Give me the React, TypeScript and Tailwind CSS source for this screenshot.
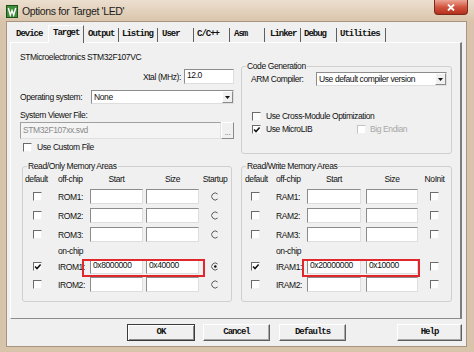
import React from "react";

function Check({ checked = false, disabled = false }: { checked?: boolean; disabled?: boolean }) {
  return (
    <span
      className={
        "relative block h-[9px] w-[9px] shrink-0 border bg-white border-r-[#f2f2f2] border-b-[#f2f2f2] " +
        (disabled ? "border-t-[#c2c2c2] border-l-[#c2c2c2]" : "border-t-[#6b6b6b] border-l-[#6b6b6b]")
      }
    >
      {checked && (
        <svg className="absolute left-0 top-0" width="8" height="8" viewBox="0 0 8 8">
          <path d="M1 3.5 L3 5.6 L6.6 1.4" stroke="#111" strokeWidth="1.5" fill="none" />
        </svg>
      )}
    </span>
  );
}

function Radio({ checked = false }: { checked?: boolean }) {
  return (
    <svg width="8" height="9" viewBox="0 0 8 9" className="block">
      <path d="M6.6 2 A3.5 3.5 0 1 0 6.6 7" stroke="#5a5a5a" strokeWidth="1" fill="none" />
      {checked && <circle cx="4.3" cy="4.5" r="1.3" fill="#111" />}
    </svg>
  );
}

function Field({ className = "", value = "" }: { className?: string; value?: string }) {
  return (
    <div
      className={
        "h-[15px] shrink-0 overflow-hidden whitespace-nowrap border bg-white pl-[2px] leading-[11px] text-[#111] border-t-[#8c8c8c] border-l-[#8c8c8c] border-r-[#dedede] border-b-[#dedede] " +
        className
      }
    >
      {value}
    </div>
  );
}

function Select({ className = "", value }: { className?: string; value: string }) {
  return (
    <div
      className={
        "flex h-[14px] shrink-0 items-center justify-between border bg-white pl-[2px] border-t-[#8c8c8c] border-l-[#8c8c8c] border-r-[#dedede] border-b-[#dedede] " +
        className
      }
    >
      <span className="whitespace-nowrap leading-[12px]">{value}</span>
      <span className="flex h-[12px] w-[11px] shrink-0 items-center justify-center border border-t-white border-l-white border-r-[#8a8a8a] border-b-[#8a8a8a] bg-[#f0f0f0]">
        <svg width="5" height="3" viewBox="0 0 5 3">
          <path d="M0 0 H5 L2.5 3 Z" fill="#111" />
        </svg>
      </span>
    </div>
  );
}

type MemCfg = {
  title: string;
  lastHeader: string;
  prefix: string;
  outer: string;
  c1: string;
  c2: string;
  ws: string;
  gap: string;
  wz: string;
  cbMl: string;
  defPl: string;
  start: string;
  size: string;
  radio: boolean;
  red: string;
};

function MemRow({
  cfg,
  label,
  checked,
  start,
  size,
  lastChecked,
  mt,
}: {
  cfg: MemCfg;
  label: string;
  checked: boolean;
  start: string;
  size: string;
  lastChecked: boolean;
  mt: string;
}) {
  return (
    <div className={"flex h-[15px] items-center " + mt}>
      <div className={"shrink-0 " + cfg.c1}>
        <div className={cfg.cbMl}>
          <Check checked={checked} />
        </div>
      </div>
      <div className={"shrink-0 whitespace-nowrap leading-[12px] " + cfg.c2}>{label}</div>
      <Field className={cfg.ws} value={start} />
      <div className={"shrink-0 " + cfg.gap} />
      <Field className={cfg.wz} value={size} />
      <div className="flex flex-1 justify-center">
        {cfg.radio ? <Radio checked={lastChecked} /> : <Check />}
      </div>
    </div>
  );
}

function MemGroup({ cfg }: { cfg: MemCfg }) {
  const p = cfg.prefix;
  return (
    <div className={"relative h-[136px] shrink-0 rounded-[3px] border border-[#cfcfcf] " + cfg.outer}>
      <span className="absolute left-[4px] top-[-7px] whitespace-nowrap bg-[#f0f0f0] px-[1px] leading-[12px]">{cfg.title}</span>
      <div className="mt-[6px] flex h-[12px] items-center whitespace-nowrap leading-[12px]">
        <div className={"shrink-0 " + cfg.c1 + " " + cfg.defPl}>default</div>
        <div className={"shrink-0 " + cfg.c2}>off-chip</div>
        <div className={"shrink-0 text-center " + cfg.ws}>Start</div>
        <div className={"shrink-0 " + cfg.gap} />
        <div className={"shrink-0 text-center " + cfg.wz}>Size</div>
        <div className="flex-1 text-center">{cfg.lastHeader}</div>
      </div>
      <MemRow cfg={cfg} label={p + "1:"} checked={false} start="" size="" lastChecked={false} mt="mt-[4px]" />
      <MemRow cfg={cfg} label={p + "2:"} checked={false} start="" size="" lastChecked={false} mt="mt-[4px]" />
      <MemRow cfg={cfg} label={p + "3:"} checked={false} start="" size="" lastChecked={false} mt="mt-[4px]" />
      <div className="mt-[3px] flex h-[12px] items-center leading-[12px]">
        <div className={"shrink-0 " + cfg.c1} />
        <div>on-chip</div>
      </div>
      <MemRow cfg={cfg} label={"I" + p + "1:"} checked={true} start={cfg.start} size={cfg.size} lastChecked={true} mt="mt-[2px]" />
      <MemRow cfg={cfg} label={"I" + p + "2:"} checked={false} start="" size="" lastChecked={false} mt="mt-[3px]" />
      <div className={"absolute top-[92px] h-[18px] border-2 border-[#e0282c] " + cfg.red} />
    </div>
  );
}

const tabs: [string, string][] = [
  ["Device", "w-[38px] pl-[6px]"],
  ["Target", "w-[36px] pl-[4px]"],
  ["Output", "w-[35px] pl-[4px]"],
  ["Listing", "w-[39px] pl-[3px]"],
  ["User", "w-[36px] pl-[4px]"],
  ["C/C++", "w-[36px] pl-[3px]"],
  ["Asm", "w-[35px] pl-[4px]"],
  ["Linker", "w-[36px] pl-[5px]"],
  ["Debug", "w-[36px] pl-[3px]"],
  ["Utilities", "w-[49px] pl-[3px]"],
];

const romCfg: MemCfg = {
  title: "Read/Only Memory Areas",
  lastHeader: "Startup",
  prefix: "ROM",
  outer: "ml-[11px] w-[210px]",
  c1: "w-[35px]",
  c2: "w-[32px]",
  ws: "w-[53px]",
  gap: "w-[3px]",
  wz: "w-[53px]",
  cbMl: "ml-[10px]",
  defPl: "pl-[2px]",
  start: "0x8000000",
  size: "0x40000",
  radio: true,
  red: "left-[59px] w-[123px]",
};

const ramCfg: MemCfg = {
  title: "Read/Write Memory Areas",
  lastHeader: "NoInit",
  prefix: "RAM",
  outer: "ml-[9px] w-[211px]",
  c1: "w-[34px]",
  c2: "w-[31px]",
  ws: "w-[54px]",
  gap: "w-[5px]",
  wz: "w-[52px]",
  cbMl: "ml-[9px]",
  defPl: "pl-[3px]",
  start: "0x20000000",
  size: "0x10000",
  radio: false,
  red: "left-[60px] w-[118px]",
};

function Btn({ label, className, def = false }: { label: string; className: string; def?: boolean }) {
  return (
    <div
      className={
        "flex h-[17px] shrink-0 items-center justify-center font-['Liberation_Mono','DejaVu_Sans_Mono',monospace] text-[9px] font-bold tracking-[-1px] text-[#111] bg-[#f0f0f0] " +
        (def
          ? "border border-[#3a3a3a] shadow-[inset_1px_1px_0_#fff,inset_-1px_-1px_0_#8a8a8a] "
          : "border border-t-white border-l-white border-r-[#5e5e5e] border-b-[#5e5e5e] shadow-[inset_-1px_-1px_0_#a8a8a8] ") +
        className
      }
    >
      {label}
    </div>
  );
}

export default function App() {
  return (
    <div className="flex h-[352px] w-[474px] flex-col overflow-hidden bg-[#d8c4ab] font-['Liberation_Sans',Arial,sans-serif] text-[8.5px] tracking-[-0.4px] text-[#111]">
      {/* title bar */}
      <div className="flex h-[22px] shrink-0 items-center bg-gradient-to-b from-[#ecdfcf] to-[#d9c4aa]">
        <svg className="ml-[6px] shrink-0" width="12" height="13" viewBox="0 0 12 13">
          <rect x="0.5" y="0.5" width="11" height="12" fill="#3f8f3a" stroke="#1f4f1c" />
          <path d="M2.3 3 L4.3 10 L6 5.5 L7.7 10 L9.7 3" stroke="#fff" strokeWidth="1.4" fill="none" />
        </svg>
        <span className="ml-[4px] whitespace-nowrap text-[10.5px] leading-[14px] tracking-[-0.35px] text-[#1b1b1b]">
          Options for Target 'LED'
        </span>
        <div className="mb-auto ml-auto mr-[6px] flex h-[15px] w-[34px] items-center justify-center rounded-b-[4px] border border-t-0 border-[#7d2a1e] bg-gradient-to-b from-[#eaa595] via-[#d2553f] to-[#b5301c]">
          <svg width="8" height="7" viewBox="0 0 8 7">
            <path d="M1 0.5 L7 6.5 M7 0.5 L1 6.5" stroke="#fff" strokeWidth="1.8" />
          </svg>
        </div>
      </div>

      {/* middle */}
      <div className="flex h-[324px] shrink-0">
        <div className="w-[7px] shrink-0" />
        <div className="flex h-[324px] w-[459px] shrink-0 flex-col bg-[#f0f0f0] shadow-[0_0_0_1px_#a8957f]">
          {/* tabs */}
          <div className="flex h-[20px] shrink-0 items-end pl-[3px]">
            {tabs.map(([t, cls]) =>
              t === "Target" ? (
                <div
                  key={t}
                  className={
                    "relative z-10 -mb-[1px] flex h-[18px] shrink-0 items-center border-l border-t border-r border-l-white border-t-white border-r-[#5e5e5e] bg-[#f0f0f0] pb-[2px] font-['Liberation_Mono','DejaVu_Sans_Mono',monospace] text-[9px] font-bold tracking-[-1px] " +
                    cls
                  }
                >
                  {t}
                </div>
              ) : (
                <div
                  key={t}
                  className={
                    "flex h-[14px] shrink-0 items-center font-['Liberation_Mono','DejaVu_Sans_Mono',monospace] text-[9px] font-bold tracking-[-1px] " +
                    (t === "Device" ? "" : "border-r border-r-[#5e5e5e] ") +
                    cls
                  }
                >
                  {t}
                </div>
              )
            )}
          </div>

          {/* tab page */}
          <div className="ml-[3px] flex h-[277px] w-[452px] shrink-0 flex-col whitespace-nowrap border-t border-l border-b border-r-2 border-t-white border-l-white border-b-[#8d8d8d] border-r-[#7d7d7d]">
            <div className="flex h-[123px] shrink-0">
              {/* left column */}
              <div className="ml-[9px] flex w-[214px] shrink-0 flex-col">
                <div className="mt-[8px] h-[12px] leading-[12px]">STMicroelectronics STM32F107VC</div>
                <div className="mt-[6px] flex h-[15px] items-center justify-end">
                  <span className="mr-[3px] leading-[12px]">Xtal (MHz):</span>
                  <Field className="w-[50px]" value="12.0" />
                </div>
                <div className="mt-[6px] flex h-[14px] items-center">
                  <span className="leading-[12px]">Operating system:</span>
                  <Select className="ml-auto w-[143px]" value="None" />
                </div>
                <div className="mt-[5px] h-[12px] leading-[12px]">System Viewer File:</div>
                <div className="mt-[1px] flex h-[17px]">
                  <div className="flex h-[17px] w-[201px] items-center border bg-[#f4f4f4] pl-[2px] text-[#8a8a8a] border-t-[#a0a0a0] border-l-[#a0a0a0] border-r-[#e0e0e0] border-b-[#e0e0e0]">
                    STM32F107xx.svd
                  </div>
                  <div className="flex h-[17px] w-[13px] items-end justify-center border border-t-white border-l-white border-r-[#8a8a8a] border-b-[#8a8a8a] pb-[2px] leading-[8px] text-[#8a8a8a]">
                    ...
                  </div>
                </div>
                <div className="mt-[3px] flex h-[10px] items-center pl-[3px]">
                  <Check />
                  <span className="ml-[5px] leading-[12px]">Use Custom File</span>
                </div>
              </div>

              {/* right column */}
              <div className="ml-[7px] w-[211px] shrink-0">
                <div className="relative mt-[23px] h-[88px] rounded-[3px] border border-[#cfcfcf]">
                  <span className="absolute left-[4px] top-[-7px] bg-[#f0f0f0] px-[1px] leading-[12px]">Code Generation</span>
                  <div className="mt-[5px] flex h-[14px] items-center pl-[9px] pr-[4px]">
                    <span className="leading-[12px]">ARM Compiler:</span>
                    <Select className="ml-auto w-[131px]" value="Use default compiler version" />
                  </div>
                  <div className="mt-[25px] flex h-[10px] items-center pl-[10px]">
                    <Check />
                    <span className="ml-[5px] leading-[12px]">Use Cross-Module Optimization</span>
                  </div>
                  <div className="mt-[3px] flex h-[10px] items-center pl-[10px]">
                    <div className="flex w-[105px] shrink-0 items-center">
                      <Check checked />
                      <span className="ml-[5px] leading-[12px]">Use MicroLIB</span>
                    </div>
                    <Check disabled />
                    <span className="ml-[4px] leading-[12px] text-[#a8a8a8]">Big Endian</span>
                  </div>
                </div>
              </div>
            </div>

            {/* memory areas */}
            <div className="flex shrink-0">
              <MemGroup cfg={romCfg} />
              <MemGroup cfg={ramCfg} />
            </div>
          </div>

          {/* buttons */}
          <div className="mt-[5px] flex h-[17px] shrink-0">
            <Btn label="OK" className="ml-[120px] w-[68px]" def />
            <Btn label="Cancel" className="ml-[8px] w-[67px]" />
            <Btn label="Defaults" className="ml-[9px] w-[67px]" />
            <Btn label="Help" className="ml-[51px] w-[65px]" />
          </div>
        </div>
      </div>
    </div>
  );
}
